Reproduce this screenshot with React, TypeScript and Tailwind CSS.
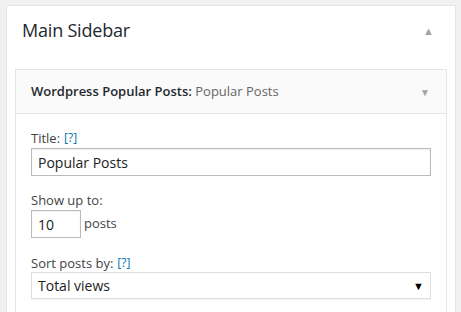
import React from "react";

const font = { fontFamily: '"Open Sans", "Noto Sans", sans-serif' };

function Help() {
  return (
    <span className="ml-[4px] text-[12px] leading-none text-[#0073aa]">[?]</span>
  );
}

export default function App() {
  return (
    <div className="w-[461px] h-[312px] overflow-hidden bg-[#f1f1f1]" style={font}>
      <div className="ml-[6px] mt-[5px] w-[450px] h-[320px] bg-white border border-[#e5e5e5] flex flex-col">
        <div className="flex items-center justify-between h-[48px] pl-[15px] pr-[21px]">
          <h2 className="text-[18px] text-[#23282d] leading-none tracking-[-0.2px]">Main Sidebar</h2>
          <span className="text-[11px] text-[#a0a5aa] leading-none">▲</span>
        </div>
        <div className="ml-[8px] mt-[15px] w-[432px] border border-[#e5e5e5] flex flex-col">
          <div className="h-[44px] bg-[#fafafa] border-b border-[#e5e5e5] flex items-center justify-between pl-[15px] pr-[16px]">
            <div className="text-[13px] text-[#23282d] leading-none">
              <span className="font-semibold">Wordpress Popular Posts:</span>{" "}
              <span className="text-[#666]">Popular Posts</span>
            </div>
            <span className="text-[10px] text-[#a0a5aa] leading-none">▼</span>
          </div>
          <div className="px-[15px] pt-[15px] pb-[20px] text-[13px] text-[#444] flex flex-col">
            <div className="h-[18px] leading-[18px] flex items-center">Title:<Help /></div>
            <input
              readOnly
              value="Popular Posts"
              className="mt-[1px] w-[400px] h-[28px] border border-[#bbb] shadow-[inset_0_1px_2px_rgba(0,0,0,0.07)] px-[6px] text-[14px] text-[#222] outline-none"
              style={font}
            />
            <div className="mt-[15px] h-[18px] leading-[18px]">Show up to:</div>
            <div className="mt-[1px] flex items-center">
              <input
                readOnly
                value="10"
                className="w-[50px] h-[28px] border border-[#bbb] shadow-[inset_0_1px_2px_rgba(0,0,0,0.07)] px-[6px] text-[14px] text-[#222] outline-none"
                style={font}
              />
              <span className="ml-[3px] text-[13px]">posts</span>
            </div>
            <div className="mt-[16px] h-[18px] leading-[18px] flex items-center">Sort posts by:<Help /></div>
            <div className="w-[400px] h-[27px] border border-[#ddd] flex items-center justify-between pl-[6px] pr-[6px] shadow-[0_1px_1px_rgba(0,0,0,0.04)]">
              <span className="text-[14px] text-[#222]">Total views</span>
              <span className="text-[11px] text-black leading-none">▼</span>
            </div>
          </div>
        </div>
      </div>
    </div>
  );
}
